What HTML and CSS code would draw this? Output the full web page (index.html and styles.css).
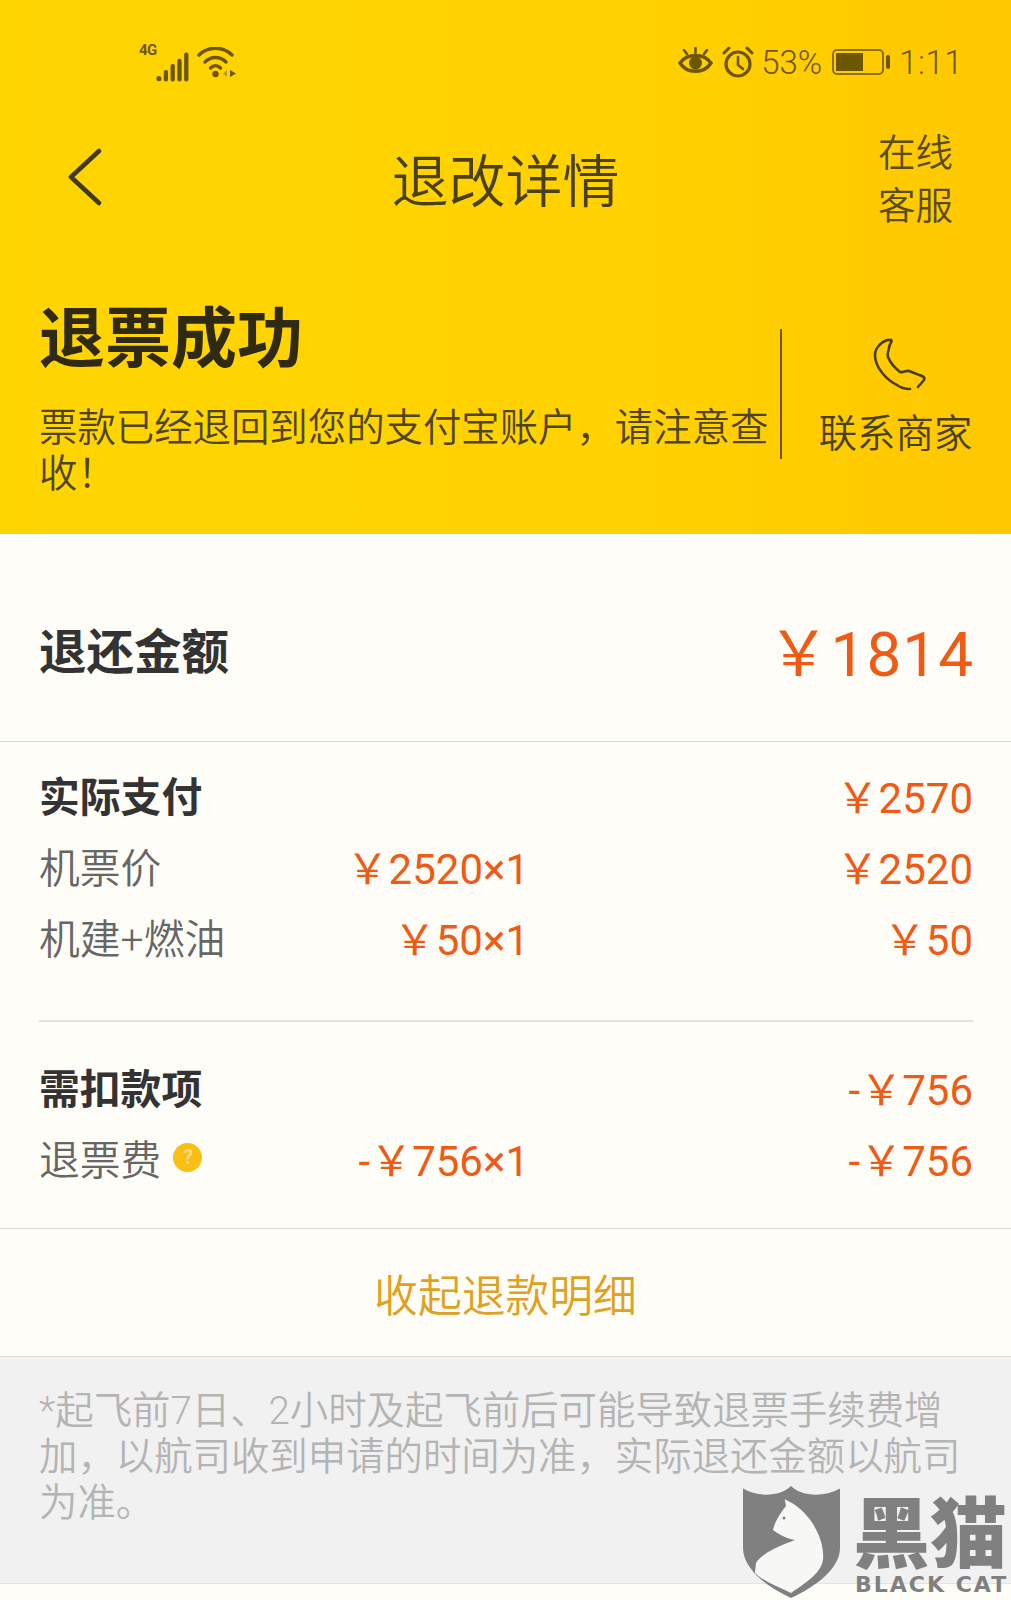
FILE: index.html
```html
<!DOCTYPE html>
<html lang="zh">
<head>
<meta charset="utf-8">
<title>退改详情</title>
<link rel="stylesheet" href="styles.css">
</head>
<body>
<div class="page">
  <header class="hero">
    <div class="status">
      <div class="status-left">
        <span class="net">4G</span>
        <svg class="sig" width="33" height="32" viewBox="0 0 34 32"><g fill="#6d5600"><circle cx="3" cy="28" r="2.6"/><rect x="8" y="19" width="4.4" height="12" rx="2"/><rect x="15" y="13" width="4.4" height="18" rx="2"/><rect x="22" y="7.5" width="4.4" height="23.5" rx="2"/><rect x="29" y="1" width="4.4" height="30" rx="2"/></g></svg>
        <svg class="wifi" width="40" height="34" viewBox="0 0 40 34"><g fill="none" stroke="#6d5600" stroke-width="3.4" stroke-linecap="round"><path d="M2 8C11 -1 26 -1 35 8"/><path d="M8 15C14 9 23 9 29 15"/><path d="M13.5 21C16.5 18 20.5 18 23.5 21"/></g><circle cx="18.5" cy="27" r="3.2" fill="#6d5600"/><path d="M33 23l6 3.5-6 3.500z" fill="#6d5600"/><path d="M30 23l-4 3.5 4 3.500z" fill="#b59a10"/></svg>
      </div>
      <div class="status-right">
        <svg width="36" height="30" viewBox="0 0 36 30"><g fill="none" stroke="#6d5600" stroke-linecap="round"><path stroke-width="3.4" d="M2 16C9 6 26 6 33 16C26 27 9 27 2 16Z"/><path stroke-width="2.6" d="M17.5 1v5M6 3l3 4M29 3l-3 4"/></g><circle cx="17.5" cy="16" r="6.5" fill="#6d5600"/></svg>
        <svg width="32" height="32" viewBox="0 0 32 32"><g fill="none" stroke="#6d5600" stroke-linecap="round"><circle cx="16" cy="18" r="12" stroke-width="3.2"/><path stroke-width="2.6" d="M16 11v8l5 4"/><path stroke-width="3" d="M2 7l5-5M30 7l-5-5"/></g></svg>
        <span class="pct">53%</span>
        <span class="battery"><span class="cell"><span class="charge"></span></span><span class="nub"></span></span>
        <span class="time">1:11</span>
      </div>
    </div>

    <nav class="nav">
      <svg class="back" width="34" height="58" viewBox="0 0 34 58"><path d="M31 3L3 29l28 26" fill="none" stroke="#3f3a22" stroke-width="4.5" stroke-linecap="round" stroke-linejoin="round"/></svg>
      <h1 class="title">退改详情</h1>
      <div class="service">在线<br>客服</div>
    </nav>

    <div class="banner">
      <div class="banner-main">
        <h2 class="headline">退票成功</h2>
        <p class="desc">票款已经退回到您的支付宝账户，请注意查收！</p>
      </div>
      <div class="contact">
        <svg class="phone" width="54" height="54" viewBox="0 0 54 54"><path d="M18 2C12 1 2 8 2 17C2 30 14 42 24 47C28 50 33 51 37 51M45 49L51 42C52 40 51 39 49 38L36 33C33 32 30 35 27 34C22 30 17 24 15 19C14 14 16 12 16 10C16 6 20 3 18 2" fill="none" stroke="#4a3f14" stroke-width="2.6" stroke-linejoin="round" stroke-linecap="round"/></svg>
        <span class="contact-label">联系商家</span>
      </div>
    </div>
  </header>

  <section class="refund">
    <span class="refund-label">退还金额</span>
    <span class="refund-amount"><span class="yen">￥</span>1814</span>
  </section>

  <section class="detail">
    <div class="group">
      <div class="row head"><span class="name">实际支付</span><span class="unit"></span><span class="sum"><span class="yen">￥</span>2570</span></div>
      <div class="row"><span class="name">机票价</span><span class="unit"><span class="yen">￥</span>2520×1</span><span class="sum"><span class="yen">￥</span>2520</span></div>
      <div class="row"><span class="name">机建+燃油</span><span class="unit"><span class="yen">￥</span>50×1</span><span class="sum"><span class="yen">￥</span>50</span></div>
    </div>
    <div class="group second">
      <div class="row head"><span class="name">需扣款项</span><span class="unit"></span><span class="sum">-<span class="yen">￥</span>756</span></div>
      <div class="row"><span class="name">退票费<span class="help">?</span></span><span class="unit">-<span class="yen">￥</span>756×1</span><span class="sum">-<span class="yen">￥</span>756</span></div>
    </div>
  </section>

  <div class="collapse">收起退款明细</div>

  <section class="note">*起飞前7日、2小时及起飞前后可能导致退票手续费增加，以航司收到申请的时间为准，实际退还金额以航司为准。</section>

  <div class="watermark">
    <svg width="97" height="113" viewBox="0 0 97 113"><path d="M0 2.500C16 12 38 10 48 0C58 10 80 12 97 2.500V62C97 82 74 100 48 112C22 100 0 82 0 62Z" fill="#808080"/><path d="M41.700 13.300L47 16C68 27 82 54 80 74C78 84 72 91 48 107C34 100 20 95 12 87C12 83 13 80 13 77C18 70 25 64 52 54C46 53 40 51 30 44C31 38 37 27 43 20Z" fill="#f7f7f5"/><circle cx="41" cy="32" r="1.500" fill="#808080"/></svg>
    <div class="wm-text">
      <span class="wm-cn">黑猫</span>
      <span class="wm-en">BLACK CAT</span>
    </div>
  </div>
</div>
</body>
</html>
```
FILE: styles.css
```css
* { box-sizing: border-box; }
html, body { margin: 0; padding: 0; }
body {
  width: 1011px;
  height: 1600px;
  overflow: hidden;
  background: #fffdf8;
  font-family: "Roboto", "Noto Sans CJK SC", sans-serif;
  color: #333;
}
.page { position: relative; width: 1011px; height: 1600px; overflow: hidden; }

.hero {
  height: 534px;
  background: linear-gradient(90deg, #ffd500 0%, #ffd200 60%, #ffc800 100%);
  display: flex;
  flex-direction: column;
}
.status {
  height: 62px;
  margin-top: 31px;
  padding: 0 48px 0 139px;
  display: flex;
  justify-content: space-between;
  align-items: center;
}
.status-left { display: flex; align-items: flex-start; height: 36px; margin-top: -10px; }
.net { font: 700 15px/1 "Roboto", sans-serif; color: #6d5600; margin-top: 4px; width: 18px; letter-spacing: -0.5px; }
.sig { margin-top: 12px; margin-left: -1px; margin-right: 8px; }
.wifi { margin-top: 8px; }
.status-right { display: flex; align-items: center; gap: 8px; color: #6d5600; }
.pct { font-size: 33px; font-weight: 300; margin-left: -1px; }
.battery { display: flex; align-items: center; gap: 2px; margin-left: 2px; }
.cell { width: 52px; height: 26px; border: 2px solid #8a7200; border-radius: 5px; padding: 2px; display: block; }
.charge { display: block; width: 27px; height: 100%; background: #6d5600; }
.nub { width: 4px; height: 14px; background: #6d5600; border-radius: 2px; }
.time { font-size: 33px; font-weight: 300; margin-left: 1px; letter-spacing: 0.5px; }

.nav {
  height: 110px;
  margin-top: 28px;
  display: grid;
  grid-template-columns: 1fr auto 1fr;
  align-items: center;
  padding: 0 57px;
}
.back { justify-self: start; margin-left: 11px; }
.title {
  margin: 0;
  font-size: 57px;
  font-weight: 350;
  color: #4a4016;
  margin-top: -1px;
}
.service {
  justify-self: end;
  margin-top: 6px;
  margin-right: 1px;
  font-size: 37.500px;
  line-height: 53px;
  font-weight: 350;
  color: #5a4c10;
}

.banner {
  flex: 1;
  display: flex;
  padding: 0 0 0 39px;
}
.banner-main { width: 741px; padding-top: 70px; }
.headline { margin: 0; font-size: 66px; line-height: 78px; font-weight: 700; color: #2e2a14; }
.desc { margin: 26px 0 0; font-size: 38.400px; line-height: 46px; font-weight: 350; color: #50441a; width: 741px; }
.contact {
  margin-top: 98px;
  width: 231px;
  height: 130px;
  border-left: 2px solid #6d5600;
  padding-top: 9px;
  display: flex;
  flex-direction: column;
  align-items: center;
}
.phone { margin-left: 6px; }
.contact-label { margin-top: 19px; font-size: 38.400px; line-height: 46px; font-weight: 350; color: #4a4016; margin-right: 2px; }

.refund {
  height: 208px;
  padding: 22px 37px 0 39px;
  display: flex;
  justify-content: space-between;
  align-items: center;
  border-bottom: 1px solid #dcdcd8;
}
.refund-label { font-size: 47.500px; font-weight: 700; color: #333; }
.refund-amount { font-size: 62px; font-weight: 400; color: #ef5a14; letter-spacing: 1px; }
.refund-amount .yen { font-size: 62px; font-weight: 400; }
.yen { font-family: "Noto Sans CJK SC", sans-serif; font-weight: 400; }

.detail { height: 487px; padding: 17px 38px 0 39px; border-bottom: 1px solid #dcdcd8; }
.group { display: flex; flex-direction: column; }
.second { margin-top: 48px; border-top: 2px solid #e3e3df; padding-top: 29px; }
.row {
  height: 71px;
  display: grid;
  grid-template-columns: 227px 263px 1fr;
  align-items: center;
  font-size: 40.800px;
  font-weight: 350;
  color: #666;
}
.row .unit, .row .sum { text-align: right; color: #ef5a14; font-weight: 400; font-size: 42px; }
.row .name { display: flex; align-items: center; }
.head .name { font-weight: 700; color: #333; }
.help {
  width: 29px;
  height: 29px;
  margin-left: 12px;
  border-radius: 50%;
  background: #f9bf15;
  color: #f7dd80;
  font: 700 20px/29px "Roboto", sans-serif;
  text-align: center;
}

.collapse {
  height: 128px;
  display: flex;
  align-items: center;
  justify-content: center;
  font-size: 43.800px;
  font-weight: 350;
  color: #e0a020;
  border-bottom: 1px solid #dcdcd8;
}
.note {
  height: 227px;
  background: #f1f1f1;
  padding: 31px 39px 0;
  font-size: 38.400px;
  line-height: 46px;
  font-weight: 350;
  color: #b4b4b4;
  border-bottom: 1px solid #e3e3e3;
}

.watermark {
  position: absolute;
  left: 743px;
  top: 1486px;
  display: flex;
  gap: 13px;
}
.wm-text { display: flex; flex-direction: column; margin-top: 6px; }
.wm-cn { font: 900 77px/74px "Noto Sans CJK SC", sans-serif; color: #808080; white-space: nowrap; }
.wm-en { font: 700 22px/30px "DejaVu Sans", sans-serif; color: #808080; letter-spacing: 2px; white-space: nowrap; margin-top: 4px; margin-left: 2px; }
```
